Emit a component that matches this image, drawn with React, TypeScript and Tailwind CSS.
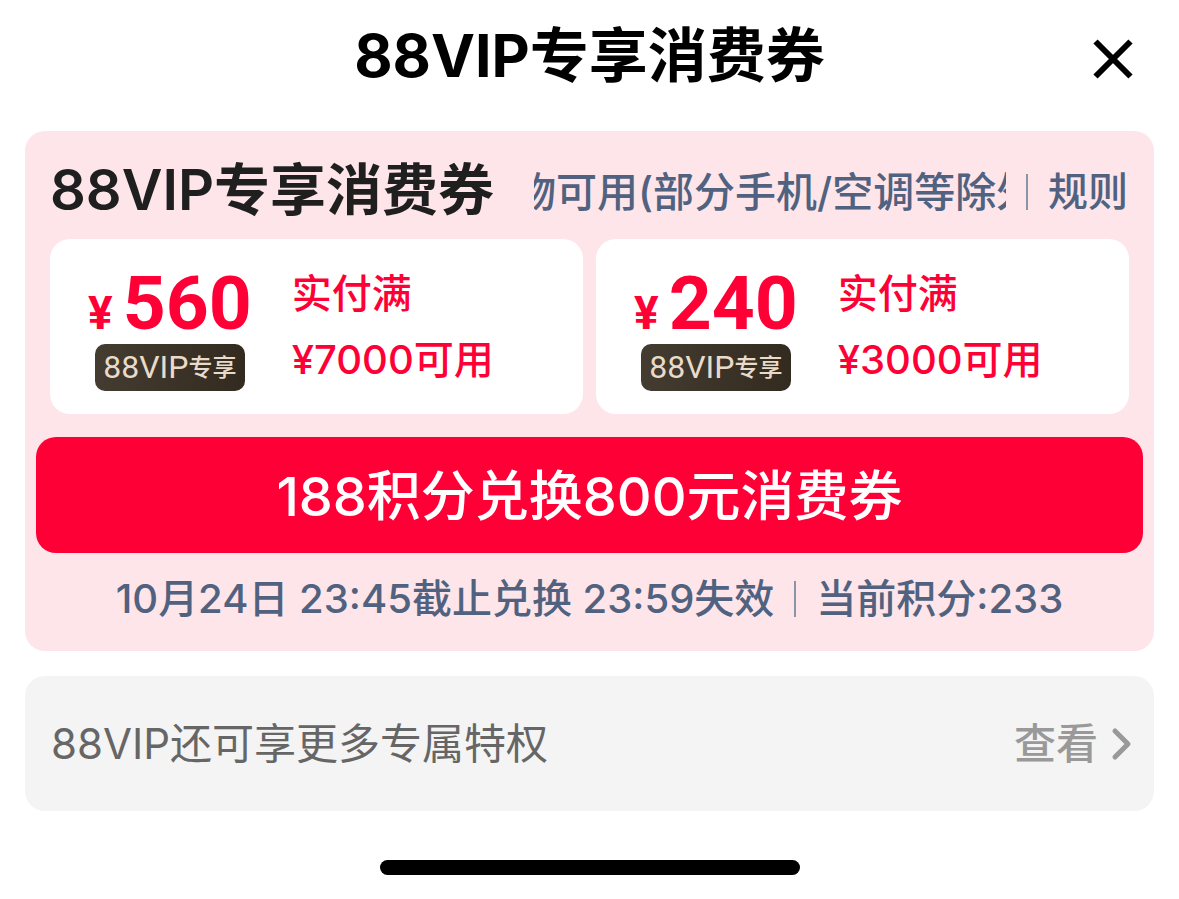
import React from 'react';

interface Coupon {
    amount: string;
    threshold: string;
}

const coupons: Coupon[] = [
    { amount: '560', threshold: '¥7000可用' },
    { amount: '240', threshold: '¥3000可用' },
];

// --- 1. Sheet Header ---
const SheetHeader: React.FC = () => (
    <header className="relative flex h-[131px] items-start justify-center pt-5">
        <h1 className="text-[59px] leading-[72px] font-bold text-black">88VIP专享消费券</h1>
        <button type="button" aria-label="关闭" className="absolute top-[38px] right-[45px]">
            <svg viewBox="0 0 42 42" className="size-[42px]" fill="none" stroke="currentColor" strokeWidth="6">
                <path d="M3.5 3.5L38.5 38.5M38.5 3.5L3.5 38.5" />
            </svg>
        </button>
    </header>
);

// --- 2. Single Coupon ---
const CouponCard: React.FC<{ coupon: Coupon }> = ({ coupon }) => (
    <li className="flex h-[175px] flex-1 gap-10 rounded-[20px] bg-white pl-[38px] text-[#ff0036]">
        <div className="flex flex-col items-center pt-[25px]">
            <div className="flex h-[80px] items-baseline gap-2.5 font-['Roboto','Noto_Sans_CJK_SC',sans-serif] font-bold">
                <span className="text-[46px] leading-[78px]">¥</span>
                <span className="text-[75px] leading-[78px]">{coupon.amount}</span>
            </div>
            <span className="flex h-[47px] w-[150px] items-center justify-center rounded-[10px] bg-linear-to-r from-[#443c31] to-[#332b20] text-[#eadbc8]">
                <span className="font-['Roboto',sans-serif] text-[32px] leading-[47px]">88VIP</span>
                <span className="text-2xl leading-[47px] font-medium">专享</span>
            </span>
        </div>
        <div className="flex flex-col pt-[22px] text-[40px] leading-[66px] font-medium">
            <span>实付满</span>
            <span>{coupon.threshold}</span>
        </div>
    </li>
);

// --- 3. Coupon Panel ---
const CouponPanel: React.FC = () => (
    <section className="mx-[25px] h-[520px] rounded-[20px] bg-[#fee5e9] text-[#50627f]">
        <div className="flex h-[108px] items-center pt-2.5 pr-[26px] pl-[25px] font-medium">
            <h2 className="shrink-0 text-[56px] leading-[72px] font-semibold text-[#1f1f1f]">88VIP专享消费券</h2>
            <div className="ml-10 flex min-w-0 flex-1 items-center pt-1 text-[40px] leading-[60px]">
                {/* Scrolling usage notice */}
                <div className="flex min-w-0 flex-1 justify-center overflow-hidden text-[41px]">
                    <span className="shrink-0 pl-3 whitespace-nowrap">物可用(部分手机/空调等除外</span>
                </div>
                <span className="mx-5 h-9 w-0.5 shrink-0 bg-[#8b93a7]" />
                <a href="#rules" className="shrink-0">规则</a>
            </div>
        </div>

        <ul className="flex gap-[13px] px-[25px]">
            {coupons.map((coupon) => (
                <CouponCard key={coupon.amount} coupon={coupon} />
            ))}
        </ul>

        <div className="px-[11px] pt-[23px]">
            <button type="button" className="h-[116px] w-full rounded-[20px] bg-[#ff0036] pt-1 text-[54px] leading-[72px] font-medium text-white">
                188积分兑换800元消费券
            </button>
        </div>

        <p className="flex items-center justify-center pt-4 text-[40px] leading-[60px] font-medium whitespace-nowrap">
            <span>10月24日 23:45截止兑换 23:59失效</span>
            <span className="mx-5 h-9 w-0.5 bg-[#8b93a7]" />
            <span>当前积分:233</span>
        </p>
    </section>
);

// --- 4. More Benefits Entry ---
const MoreBenefits: React.FC = () => (
    <a
        href="#benefits"
        className="mx-[25px] mt-[25px] flex h-[135px] items-center justify-between rounded-[20px] bg-[#f4f4f4] pr-5 pl-[26px] text-[42px] leading-[60px]"
    >
        <span className="text-[#666666]">88VIP还可享更多专属特权</span>
        <span className="flex items-center gap-3 font-medium text-[#999999]">
            查看
            <svg
                viewBox="0 0 24 36"
                className="h-9 w-6"
                fill="none"
                stroke="currentColor"
                strokeWidth="5"
                strokeLinecap="round"
                strokeLinejoin="round"
            >
                <path d="M5 5L18 18L5 31" />
            </svg>
        </span>
    </a>
);

export default function App() {
    return (
        <main className="min-h-screen bg-white font-['Inter','Noto_Sans_CJK_SC',sans-serif]">
            <SheetHeader />
            <CouponPanel />
            <MoreBenefits />
            <div className="mx-auto mt-[49px] h-[15px] w-[420px] rounded-full bg-black" />
        </main>
    );
}
